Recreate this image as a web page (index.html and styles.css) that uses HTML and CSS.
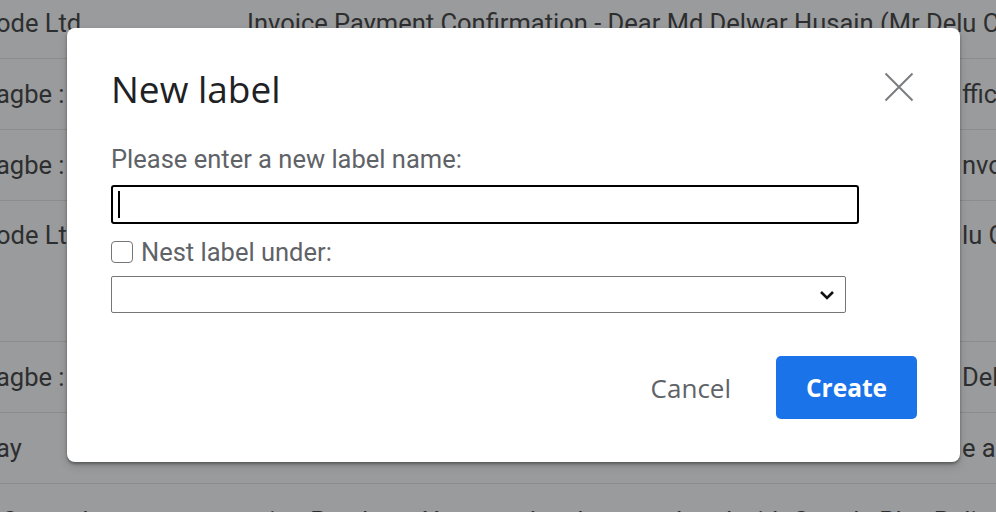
FILE: index.html
```html
<!DOCTYPE html>
<html lang="en">
<head>
<meta charset="utf-8">
<title>New label</title>
<link rel="stylesheet" href="styles.css">
</head>
<body>
<div class="mail-list">
  <div class="row">
    <div class="sender">ode Ltd</div>
    <div class="subject">Invoice Payment Confirmation - Dear Md Delwar Husain (Mr Delu Chowdhury)</div>
  </div>
  <div class="row">
    <div class="sender">agbe :</div>
    <div class="subject"><span class="hidden-part">Your monthly statement is ready to view in the</span><span class="tail">fficial notice</span></div>
  </div>
  <div class="row">
    <div class="sender">agbe :</div>
    <div class="subject"><span class="hidden-part">Reminder about the outstanding balance for the</span><span class="tail">nvoice</span></div>
  </div>
  <div class="row row-tall">
    <div class="sender">ode Ltd</div>
    <div class="subject"><span class="hidden-part">Payment received for order number 10432 - Mr De</span><span class="tail">lu Chowdhury</span></div>
  </div>
  <div class="row">
    <div class="sender">agbe :</div>
    <div class="subject"><span class="hidden-part">Account update notice sent to Md Delwar Husain</span><span class="tail">Delwar</span></div>
  </div>
  <div class="row">
    <div class="sender">ay</div>
    <div class="subject"><span class="hidden-part">Your receipt for the recent purchase is now</span><span class="tail">e available</span></div>
  </div>
  <div class="row row-last">
    <div class="sender">&nbsp;Sagar Jay</div>
    <div class="subject">ation Purchase Your app has been updated with Google Play Policy</div>
  </div>
</div>
<div class="scrim"></div>

<div class="dialog" role="dialog" aria-labelledby="dlg-title">
  <div class="dialog-head">
    <h1 id="dlg-title" class="dialog-title">New label</h1>
    <button class="close" aria-label="Close">
      <svg width="30" height="30" viewBox="0 0 30 30"><path d="M1.5 1.5 L28.5 28.5 M28.5 1.5 L1.5 28.5" stroke="#7a7c7f" stroke-width="2" fill="none"/></svg>
    </button>
  </div>
  <div class="dialog-body">
    <label class="prompt" for="labelname">Please enter a new label name:</label>
    <div class="text-input"><span class="caret"></span></div>
    <label class="nest"><span class="checkbox"></span><span>Nest label under:</span></label>
    <div class="select">
      <svg width="16" height="12" viewBox="0 0 16 12"><path d="M2 3 L8 9 L14 3" stroke="#111" stroke-width="2.6" fill="none"/></svg>
    </div>
  </div>
  <div class="dialog-actions">
    <button class="btn-text">Cancel</button>
    <button class="btn-primary">Create</button>
  </div>
</div>
</body>
</html>
```
FILE: styles.css
```css
* { box-sizing: border-box; }
html, body { margin: 0; padding: 0; }
body {
  width: 996px;
  height: 512px;
  overflow: hidden;
  position: relative;
  background: #ffffff;
  font-family: Roboto, "Liberation Sans", sans-serif;
}

.mail-list {
  display: flex;
  flex-direction: column;
  margin-top: -12px;
  height: 524px;
  overflow: hidden;
}
.row {
  display: flex;
  flex: none;
  align-items: center;
  height: 71px;
  border-bottom: 1px solid #e4e4e4;
  font-size: 25.5px;
  color: #3a3a3a;
  white-space: nowrap;
  overflow: hidden;
}
.row-tall { height: 141px; align-items: flex-start; padding-top: 19px; }
.row-last { align-items: flex-start; padding-top: 22px; }
.sender { width: 247px; flex: none; overflow: hidden; text-indent: -4px; }
.subject { flex: 1; overflow: hidden; display: flex; }
.hidden-part { width: 715px; flex: none; overflow: hidden; }
.tail { flex: none; }

.scrim {
  position: absolute;
  inset: 0;
  background: rgba(32, 33, 36, 0.45);
}

.dialog {
  position: absolute;
  left: 67px;
  top: 28px;
  width: 893px;
  height: 434px;
  background: #fff;
  border-radius: 8px;
  box-shadow: 0 2px 3px rgba(0,0,0,0.35), 0 4px 10px rgba(0,0,0,0.15);
  padding: 0 43px 43px 44px;
  display: flex;
  flex-direction: column;
}
.dialog-head {
  display: flex;
  justify-content: space-between;
  align-items: center;
  height: 118px;
}
.dialog-title {
  margin: 4px 0 0 0;
  font-family: "Open Sans", Lato, sans-serif;
  font-weight: 400;
  font-size: 37px;
  line-height: 44px;
  color: #202124;
}
.close {
  border: 0;
  background: none;
  padding: 0;
  margin-right: 3px;
  width: 30px;
  height: 30px;
  display: flex;
}
.dialog-body {
  display: flex;
  flex-direction: column;
}
.prompt {
  font-size: 25.5px;
  color: #5f6368;
  line-height: 26px;
}
.text-input {
  margin-top: 13px;
  width: 748px;
  height: 39px;
  border: 2.5px solid #000;
  border-radius: 3px;
  display: flex;
  align-items: center;
  padding-left: 5px;
}
.caret { width: 1.5px; height: 27px; background: #000; }
.nest {
  display: flex;
  align-items: center;
  gap: 8px;
  margin-top: 15px;
  font-size: 25.5px;
  color: #5f6368;
  line-height: 26px;
}
.checkbox {
  width: 22px;
  height: 22px;
  border: 1.5px solid #767676;
  border-radius: 4px;
  background: #fff;
}
.select {
  margin-top: 11px;
  width: 735px;
  height: 37px;
  border: 1px solid #767676;
  border-radius: 2px;
  display: flex;
  align-items: center;
  justify-content: flex-end;
  padding-right: 10px;
}
.dialog-actions {
  margin-top: auto;
  display: flex;
  justify-content: flex-end;
  align-items: center;
  gap: 45px;
}
.btn-text {
  border: 0;
  background: none;
  font-family: "Open Sans", Lato, sans-serif;
  font-size: 26px;
  font-weight: 400;
  color: #5f6368;
  padding: 0;
}
.btn-primary {
  border: 0;
  background: #1a73e8;
  color: #fff;
  border-radius: 5px;
  width: 141px;
  height: 63px;
  font-family: "Open Sans", Lato, sans-serif;
  font-size: 24.5px;
  font-weight: 700;
}
```
